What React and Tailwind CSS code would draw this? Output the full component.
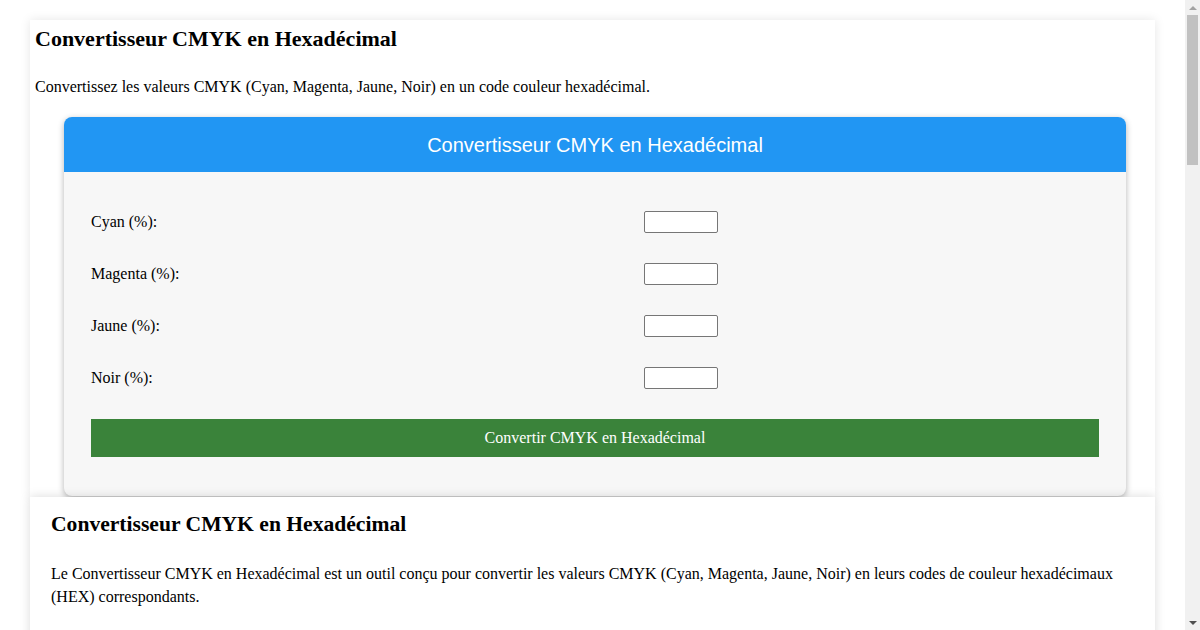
export default function App() {
  const rows = ["Cyan (%):", "Magenta (%):", "Jaune (%):", "Noir (%):"];
  return (
    <div className="h-[630px] overflow-hidden flex bg-white text-black" style={{ fontFamily: '"Liberation Serif", "Times New Roman", serif' }}>
      <div className="flex-1 min-w-0">
        <div className="h-[20px]" />
        <div className="mx-[30px] bg-white shadow-[0_0_10px_rgba(0,0,0,0.1)] pt-[5px] px-[5px] pb-[1px]">
          <h1 className="text-[22px] leading-[28px] font-bold m-0">Convertisseur CMYK en Hexadécimal</h1>
          <p className="mt-[25px] text-[16px] leading-[18px]">
            Convertissez les valeurs CMYK (Cyan, Magenta, Jaune, Noir) en un code couleur hexadécimal.
          </p>
          <div className="mt-[21px] ml-[29px] w-[1062px] rounded-[8px] overflow-hidden shadow-[0_2px_6px_rgba(0,0,0,0.3)] bg-[#f7f7f7]">
            <div
              className="h-[55px] bg-[#2196f3] text-white flex items-center justify-center text-[20px]"
              style={{ fontFamily: '"Liberation Sans", Arial, sans-serif' }}
            >
              Convertisseur CMYK en Hexadécimal
            </div>
            <div className="px-[27px] pt-[24px] pb-[39px]">
              {rows.map((r) => (
                <div key={r} className="h-[52px] flex items-center">
                  <label className="w-[553px] text-[16px]">{r}</label>
                  <input
                    type="text"
                    className="w-[74px] h-[22px] bg-white border border-[#767676] rounded-[2px] px-1 text-[13px]"
                  />
                </div>
              ))}
              <button className="mt-[15px] w-full h-[38px] bg-[#3a833a] text-white text-[16px] flex items-center justify-center">
                Convertir CMYK en Hexadécimal
              </button>
            </div>
          </div>
        </div>
        <div className="mx-[30px] bg-white shadow-[0_0_10px_rgba(0,0,0,0.15)] px-[21px] pt-[15px] pb-[60px]">
          <h2 className="text-[21.6px] leading-[24px] font-bold">Convertisseur CMYK en Hexadécimal</h2>
          <p className="mt-[26px] text-[16px] leading-[23px]">
            Le Convertisseur CMYK en Hexadécimal est un outil conçu pour convertir les valeurs CMYK (Cyan, Magenta, Jaune, Noir) en leurs codes de couleur hexadécimaux (HEX) correspondants.
          </p>
        </div>
      </div>
      <div className="w-[15px] shrink-0 bg-[#f1f1f1] flex flex-col items-center">
        <div className="h-[15px] w-full flex items-center justify-center">
          <div className="w-0 h-0 border-l-[4px] border-r-[4px] border-b-[4px] border-l-transparent border-r-transparent border-b-[#a3a3a3]" />
        </div>
        <div className="w-[11px] h-[150px] bg-[#c1c1c1]" />
        <div className="flex-1" />
        <div className="h-[15px] w-full flex items-center justify-center">
          <div className="w-0 h-0 border-l-[4px] border-r-[4px] border-t-[4px] border-l-transparent border-r-transparent border-t-[#505050]" />
        </div>
      </div>
    </div>
  );
}
